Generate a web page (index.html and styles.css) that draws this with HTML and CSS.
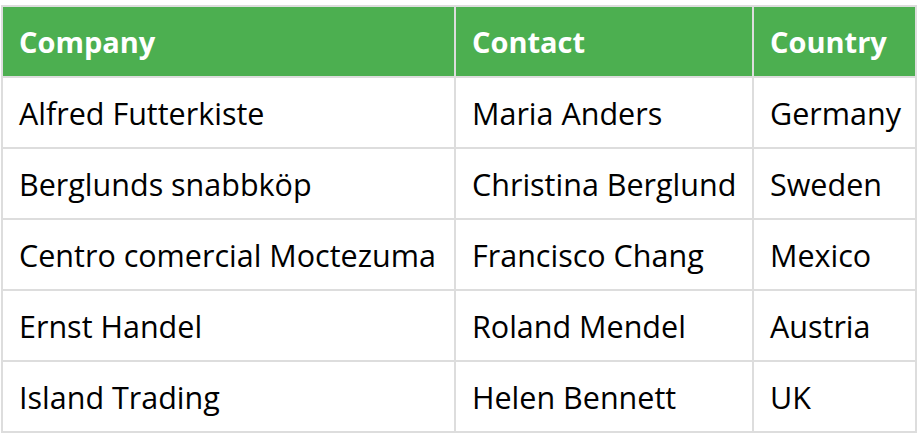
FILE: index.html
```html
<!DOCTYPE html>
<html>
<head>
<meta charset="utf-8">
<link rel="stylesheet" href="styles.css">
</head>
<body>
<table class="customers">
  <colgroup>
    <col class="col-company">
    <col class="col-contact">
    <col class="col-country">
  </colgroup>
  <tr>
    <th>Company</th>
    <th>Contact</th>
    <th>Country</th>
  </tr>
  <tr>
    <td>Alfred Futterkiste</td>
    <td>Maria Anders</td>
    <td>Germany</td>
  </tr>
  <tr>
    <td>Berglunds snabbköp</td>
    <td>Christina Berglund</td>
    <td>Sweden</td>
  </tr>
  <tr>
    <td>Centro comercial Moctezuma</td>
    <td>Francisco Chang</td>
    <td>Mexico</td>
  </tr>
  <tr>
    <td>Ernst Handel</td>
    <td>Roland Mendel</td>
    <td>Austria</td>
  </tr>
  <tr>
    <td>Island Trading</td>
    <td>Helen Bennett</td>
    <td>UK</td>
  </tr>
</table>
</body>
</html>
```
FILE: styles.css
```css
html, body {
  margin: 0;
  padding: 0;
  background: #ffffff;
}

body {
  padding: 5px 0 0 1px;
}

.customers {
  border-collapse: collapse;
  table-layout: fixed;
  width: 916px;
  font-family: "Open Sans", "Lato", sans-serif;
  font-size: 30.5px;
  line-height: 40px;
  color: #000000;
}

.col-company { width: 453px; }
.col-contact { width: 298px; }
.col-country { width: 163px; }

.customers th,
.customers td {
  border: 2px solid #dddddd;
  height: 69px;
  padding: 0 0 0 16px;
  text-align: left;
  vertical-align: middle;
  white-space: nowrap;
  box-sizing: content-box;
}

.customers th {
  background: #4caf50;
  color: #ffffff;
  font-size: 29px;
  font-weight: bold;
}
```
